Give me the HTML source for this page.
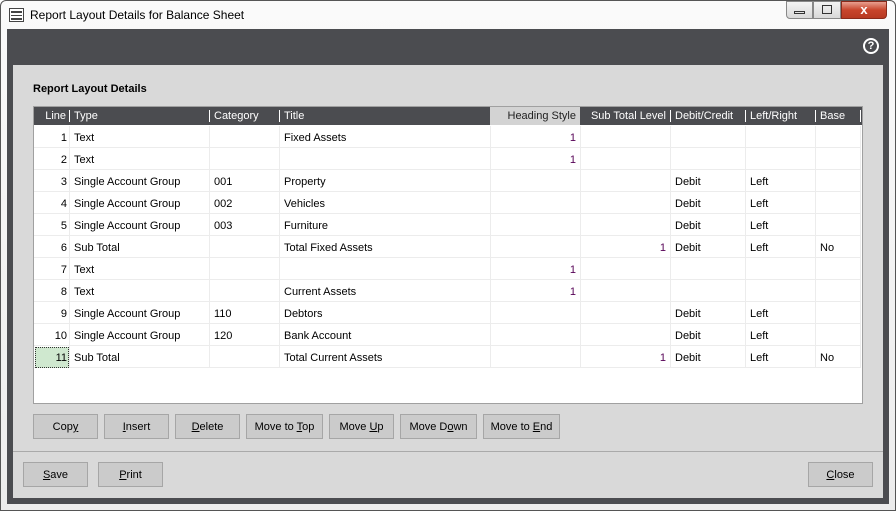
<!DOCTYPE html>
<html><head><meta charset="utf-8"><style>
*{margin:0;padding:0;box-sizing:border-box}
body{width:896px;height:511px;background:#fff;font-family:"Liberation Sans",sans-serif;font-size:11px;color:#000;position:relative;overflow:hidden}
.a{position:absolute}
.win{left:0;top:0;width:896px;height:511px;background:linear-gradient(#fafafa,#ececec);border:1px solid #555;border-radius:6px 6px 0 0}
.title{left:30px;top:8px;font-size:12px;color:#000}
.frame{left:7px;top:29px;width:882px;height:475px;background:#4b4c50}
.panel{left:13px;top:65px;width:870px;height:433px;background:#d9d9d9}
.sep{left:13px;top:451px;width:870px;height:1px;background:#aaa}
.grid{left:33px;top:106px;width:830px;height:298px;background:#fff;border:1px solid #a0a0a0}
.hdr{left:34px;top:107px;width:828px;height:18px;background:#4b4c50}
.h{position:absolute;top:108px;height:16px;line-height:16px;color:#fff;font-size:11px;white-space:nowrap}
.c{position:absolute;height:21px;line-height:21px;font-size:11px;white-space:nowrap}
.r{text-align:right}
.btn{position:absolute;height:25px;background:#cbcbcb;border:1px solid #a6a6a6;text-align:center;padding-top:2px;line-height:21px;font-size:11px;color:#000;white-space:nowrap}
u{text-decoration:underline}
.vl{position:absolute;top:126px;width:1px;height:242px;background:#ececec}
.hl{position:absolute;left:34px;width:826px;height:1px;background:#ececec}
.hs{position:absolute;top:110px;width:1px;height:12px;background:#fff}
</style></head><body>
<div class="a win"></div>
<div class="a" style="left:9px;top:8px;width:15px;height:14px;border:1px solid #444;background:#fff"></div>
<div class="a" style="left:11px;top:11px;width:11px;height:2px;background:#444"></div>
<div class="a" style="left:11px;top:15px;width:11px;height:1px;background:#444"></div>
<div class="a" style="left:11px;top:18px;width:11px;height:2px;background:#444"></div>
<div class="a title">Report Layout Details for Balance Sheet</div>
<div class="a" style="left:786px;top:1px;width:27px;height:18px;border:1px solid #888;border-radius:0 0 0 4px;background:linear-gradient(#f4f4f4,#d8d8d8)"></div>
<div class="a" style="left:794px;top:11px;width:11px;height:3px;border:1px solid #333"></div>
<div class="a" style="left:813px;top:1px;width:28px;height:18px;border:1px solid #888;background:linear-gradient(#f4f4f4,#d8d8d8)"></div>
<div class="a" style="left:822px;top:5px;width:10px;height:9px;border:1px solid #333"></div>
<div class="a" style="left:841px;top:1px;width:46px;height:18px;border:1px solid #8a2a1a;border-radius:0 0 4px 0;background:linear-gradient(#e8a090,#c8452c 50%,#b83a22);color:#fff;font-weight:bold;font-size:13px;text-align:center;line-height:16px">x</div>
<div class="a frame"></div>
<div class="a" style="left:863px;top:38px;width:16px;height:16px;border:2px solid #fff;border-radius:50%;color:#fff;font-weight:bold;font-size:11px;text-align:center;line-height:12px">?</div>
<div class="a panel"></div>
<div class="a sep"></div>
<div class="a" style="left:33px;top:83px;font-weight:bold;font-size:11px">Report Layout Details</div>
<div class="a grid"></div>
<div class="a hdr"></div>
<div class="a" style="left:490px;top:107px;width:90px;height:18px;background:#d3d3d3"></div>
<div class="h r" style="left:36px;width:30px">Line</div><div class="hs" style="left:69px"></div>
<div class="h" style="left:74px">Type</div><div class="hs" style="left:209px"></div>
<div class="h" style="left:214px">Category</div><div class="hs" style="left:279px"></div>
<div class="h" style="left:284px">Title</div>
<div class="h r" style="left:490px;width:86px;color:#222">Heading Style</div>
<div class="h r" style="left:580px;width:86px">Sub Total Level</div><div class="hs" style="left:670px"></div>
<div class="h" style="left:675px">Debit/Credit</div><div class="hs" style="left:745px"></div>
<div class="h" style="left:750px">Left/Right</div><div class="hs" style="left:815px"></div>
<div class="h" style="left:820px">Base</div><div class="hs" style="left:860px"></div>
<div class="vl" style="left:69px"></div><div class="vl" style="left:209px"></div><div class="vl" style="left:279px"></div><div class="vl" style="left:490px"></div><div class="vl" style="left:580px"></div><div class="vl" style="left:670px"></div><div class="vl" style="left:745px"></div><div class="vl" style="left:815px"></div><div class="vl" style="left:860px"></div>
<div class="hl" style="top:147px"></div><div class="hl" style="top:169px"></div><div class="hl" style="top:191px"></div><div class="hl" style="top:213px"></div><div class="hl" style="top:235px"></div><div class="hl" style="top:257px"></div><div class="hl" style="top:279px"></div><div class="hl" style="top:301px"></div><div class="hl" style="top:323px"></div><div class="hl" style="top:345px"></div><div class="hl" style="top:367px"></div>
<div class="a" style="left:35px;top:347px;width:34px;height:21px;background:#cfe8cf;border:1px dotted #333"></div>
<div style="position:absolute;left:0;top:128px;width:896px">
<div class="c r" style="top:0;left:36px;width:31px">1</div><div class="c" style="top:0;left:74px">Text</div><div class="c" style="top:0;left:284px">Fixed Assets</div><div class="c r" style="top:0;left:490px;width:86px;color:#505">1</div>
<div class="c r" style="top:22px;left:36px;width:31px">2</div><div class="c" style="top:22px;left:74px">Text</div><div class="c r" style="top:22px;left:490px;width:86px;color:#505">1</div>
<div class="c r" style="top:44px;left:36px;width:31px">3</div><div class="c" style="top:44px;left:74px">Single Account Group</div><div class="c" style="top:44px;left:214px">001</div><div class="c" style="top:44px;left:284px">Property</div><div class="c" style="top:44px;left:675px">Debit</div><div class="c" style="top:44px;left:750px">Left</div>
<div class="c r" style="top:66px;left:36px;width:31px">4</div><div class="c" style="top:66px;left:74px">Single Account Group</div><div class="c" style="top:66px;left:214px">002</div><div class="c" style="top:66px;left:284px">Vehicles</div><div class="c" style="top:66px;left:675px">Debit</div><div class="c" style="top:66px;left:750px">Left</div>
<div class="c r" style="top:88px;left:36px;width:31px">5</div><div class="c" style="top:88px;left:74px">Single Account Group</div><div class="c" style="top:88px;left:214px">003</div><div class="c" style="top:88px;left:284px">Furniture</div><div class="c" style="top:88px;left:675px">Debit</div><div class="c" style="top:88px;left:750px">Left</div>
<div class="c r" style="top:110px;left:36px;width:31px">6</div><div class="c" style="top:110px;left:74px">Sub Total</div><div class="c" style="top:110px;left:284px">Total Fixed Assets</div><div class="c r" style="top:110px;left:580px;width:86px;color:#505">1</div><div class="c" style="top:110px;left:675px">Debit</div><div class="c" style="top:110px;left:750px">Left</div><div class="c" style="top:110px;left:820px">No</div>
<div class="c r" style="top:132px;left:36px;width:31px">7</div><div class="c" style="top:132px;left:74px">Text</div><div class="c r" style="top:132px;left:490px;width:86px;color:#505">1</div>
<div class="c r" style="top:154px;left:36px;width:31px">8</div><div class="c" style="top:154px;left:74px">Text</div><div class="c" style="top:154px;left:284px">Current Assets</div><div class="c r" style="top:154px;left:490px;width:86px;color:#505">1</div>
<div class="c r" style="top:176px;left:36px;width:31px">9</div><div class="c" style="top:176px;left:74px">Single Account Group</div><div class="c" style="top:176px;left:214px">110</div><div class="c" style="top:176px;left:284px">Debtors</div><div class="c" style="top:176px;left:675px">Debit</div><div class="c" style="top:176px;left:750px">Left</div>
<div class="c r" style="top:198px;left:36px;width:31px">10</div><div class="c" style="top:198px;left:74px">Single Account Group</div><div class="c" style="top:198px;left:214px">120</div><div class="c" style="top:198px;left:284px">Bank Account</div><div class="c" style="top:198px;left:675px">Debit</div><div class="c" style="top:198px;left:750px">Left</div>
<div class="c r" style="top:220px;left:36px;width:31px">11</div><div class="c" style="top:220px;left:74px">Sub Total</div><div class="c" style="top:220px;left:284px">Total Current Assets</div><div class="c r" style="top:220px;left:580px;width:86px;color:#505">1</div><div class="c" style="top:220px;left:675px">Debit</div><div class="c" style="top:220px;left:750px">Left</div><div class="c" style="top:220px;left:820px">No</div>
</div>
<div class="btn" style="left:33px;top:414px;width:65px">Cop<u>y</u></div>
<div class="btn" style="left:104px;top:414px;width:65px"><u>I</u>nsert</div>
<div class="btn" style="left:175px;top:414px;width:65px"><u>D</u>elete</div>
<div class="btn" style="left:246px;top:414px;width:77px">Move to <u>T</u>op</div>
<div class="btn" style="left:329px;top:414px;width:65px">Move <u>U</u>p</div>
<div class="btn" style="left:400px;top:414px;width:77px">Move D<u>o</u>wn</div>
<div class="btn" style="left:483px;top:414px;width:77px">Move to <u>E</u>nd</div>
<div class="btn" style="left:23px;top:462px;width:65px"><u>S</u>ave</div>
<div class="btn" style="left:98px;top:462px;width:65px"><u>P</u>rint</div>
<div class="btn" style="left:808px;top:462px;width:65px"><u>C</u>lose</div>
</body></html>
